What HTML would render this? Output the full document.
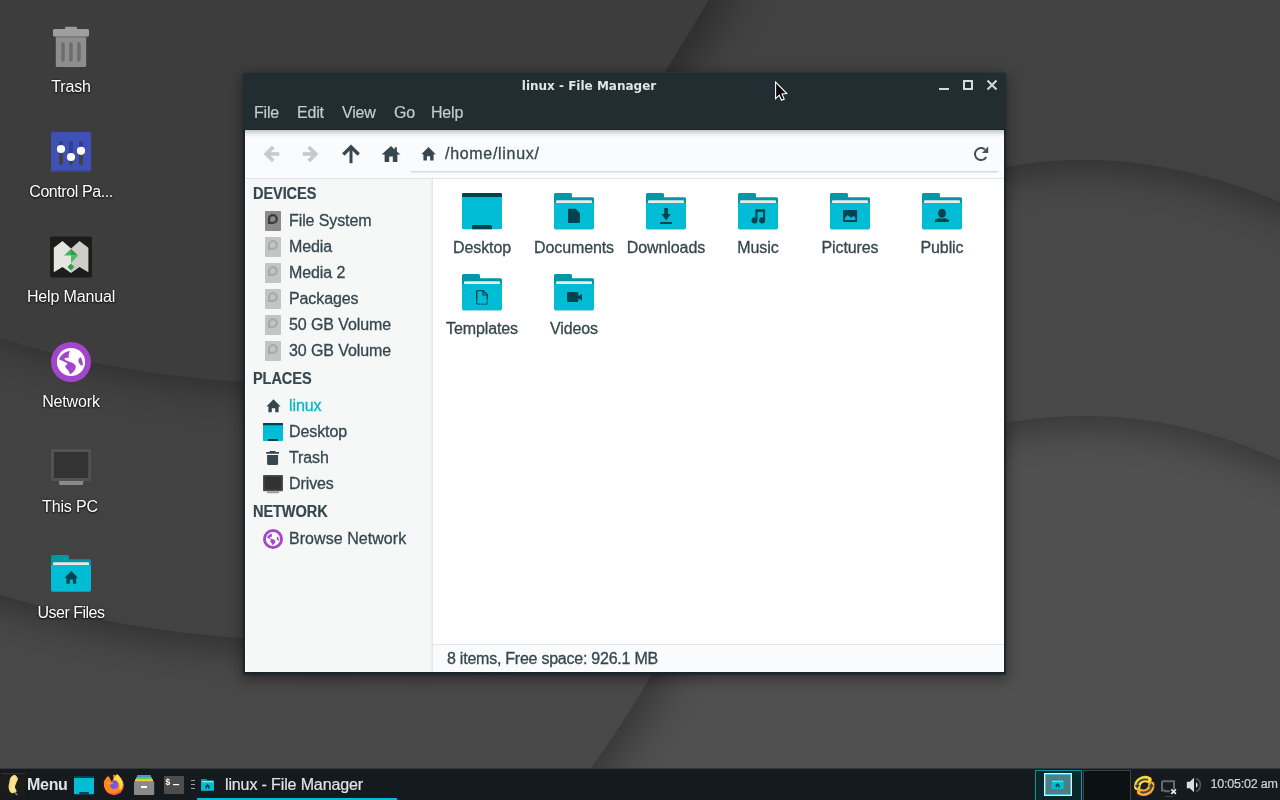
<!DOCTYPE html>
<html lang="en">
<head>
<meta charset="utf-8">
<title>linux - File Manager</title>
<style>
*{box-sizing:border-box;margin:0;padding:0}
html,body{width:1280px;height:800px;overflow:hidden;background:#444}
body{position:relative;font-family:"Liberation Sans","DejaVu Sans",sans-serif;color:#37474f;font-size:16px}
.abs{position:absolute}
#win,#panel,.dicon{will-change:transform}
.si,.fi,#status,.loc{-webkit-text-stroke:.3px currentColor}
.menu,.ptxt{-webkit-text-stroke:.2px currentColor}
#wall{position:absolute;left:0;top:0;width:1280px;height:800px}
/* desktop icons */
.dicon{position:absolute;width:120px;text-align:center;color:#fff;font-size:16px;line-height:20px;letter-spacing:-.15px;white-space:nowrap;margin-top:1px;text-shadow:0 1px 2px rgba(0,0,0,.85),0 0 2px rgba(0,0,0,.6)}
.dicon svg{display:block;margin:0 auto}
/* window */
#win{position:absolute;left:243px;top:72px;width:763px;height:602px;background:#1b262c;border-radius:3px 3px 0 0;box-shadow:0 4px 14px 1px rgba(0,0,0,.4),0 1px 2px rgba(0,0,0,.25)}
#tbar{position:absolute;left:0;top:0;width:763px;height:58px;background:#222d32;border-radius:3px 3px 0 0;box-shadow:inset 0 1px 0 #2a373d,inset 0 -1px 0 #1c262b}
#title{position:absolute;left:0;top:5px;width:692px;text-align:center;font-family:"DejaVu Sans","Liberation Sans",sans-serif;font-weight:bold;font-size:12px;line-height:18px;color:#dfe5e8}
.menu{position:absolute;top:31px;letter-spacing:-.2px;font-size:16px;line-height:20px;color:#c3ccd1}
#tool{position:absolute;left:2px;top:58px;width:759px;height:48px;background:linear-gradient(#c2c4c5 0,#d7d9da 2px,#e9eaeb 4px,#f5f6f7 6px,#fafbfc 8.500px)}
#sep1{position:absolute;left:2px;top:106px;width:759px;height:1px;background:#e2e4e5}
#side{position:absolute;left:2px;top:107px;width:187px;height:493px;background:#f6f8f8;border-left:1px solid #fff}
#sidesep{position:absolute;left:186px;top:107px;width:4px;height:493px;background:linear-gradient(to right,#f6f8f8,#eef0f1 50%,#e2e4e6)}
#main{position:absolute;left:190px;top:107px;width:571px;height:465px;background:#fff}
#stsep{position:absolute;left:190px;top:572px;width:571px;height:1px;background:#e2e4e5}
#status{position:absolute;left:190px;top:573px;width:571px;height:27px;background:#fafbfc;border-right:1px solid #fff;border-bottom:1px solid #fff;font-size:16px;line-height:28px;padding-left:14px;letter-spacing:-.24px}
.sh{position:absolute;left:8px;font-weight:bold;font-size:16px;line-height:20px;color:#37474f;transform-origin:0 50%;transform:scaleX(.91);margin-top:1px;letter-spacing:-.1px;-webkit-text-stroke:.2px currentColor}
.si{position:absolute;left:44px;font-size:16px;line-height:20px;color:#37474f;letter-spacing:-.1px;white-space:nowrap;margin-top:1px}
.fi{position:absolute;width:110px;text-align:center;font-size:16px;line-height:20px;color:#37474f;letter-spacing:-.1px;margin-top:1px}
/* panel */
#panel{position:absolute;left:0;top:769px;width:1280px;height:31px;background:#151a1e;box-shadow:0 -1px 0 #33373a}
</style>
</head>
<body>
<svg id="wall" viewBox="0 0 1280 800">
<defs>
<filter id="bl" x="-20%" y="-20%" width="140%" height="140%"><feGaussianBlur stdDeviation="17"/></filter>
<filter id="bl2" x="-20%" y="-20%" width="140%" height="140%"><feGaussianBlur stdDeviation="20"/></filter>
</defs>
<rect width="1280" height="800" fill="#505050"/>
<!-- right middle band (below arc C, above arc D) -->
<g>
<path d="M600 -40 L1400 -40 L1400 500 Q1330 478 1280 460 Q1180 416 1088 416 Q1040 416 1000 424 L900 440 L600 440 Z" fill="#000" opacity=".31" filter="url(#bl)" transform="translate(0,12)"/>
<path d="M600 -40 L1400 -40 L1400 500 Q1330 478 1280 460 Q1180 416 1088 416 Q1040 416 1000 424 L900 440 L600 440 Z" fill="#484848"/>
</g>
<!-- top right region (above arc C) -->
<g>
<path d="M600 -40 L1400 -40 L1400 250 Q1330 222 1280 202 Q1180 160 1085 160 Q1040 160 1000 168.500 L900 185 L600 185 Z" fill="#000" opacity=".31" filter="url(#bl)" transform="translate(0,12)"/>
<path d="M600 -40 L1400 -40 L1400 250 Q1330 222 1280 202 Q1180 160 1085 160 Q1040 160 1000 168.500 L900 185 L600 185 Z" fill="#424242"/>
</g>
<!-- bottom-left region (left of diagonal F) -->
<g>
<path d="M-60 300 L665 300 Q668 600 653 672 Q625 722 588 772 L545 840 L-60 840 Z" fill="#000" opacity=".33" filter="url(#bl2)" transform="translate(16,4)"/>
<path d="M-60 300 L665 300 Q668 600 653 672 Q625 722 588 772 L545 840 L-60 840 Z" fill="#484848"/>
</g>
<!-- between arc A and arc B -->
<g>
<path d="M-60 300 L-60 570 L0 595 Q150 640 330 642 Q500 640 640 600 L700 300 Z" fill="#000" opacity=".31" filter="url(#bl)" transform="translate(0,12)"/>
<path d="M-60 300 L-60 570 L0 595 Q150 640 330 642 Q500 640 640 600 L700 300 Z" fill="#424242"/>
</g>
<!-- top-left region (above arc A, left of diagonal E) -->
<g>
<path d="M-60 -40 L733.400 -40 L709 0 L665 72 Q618 160 600 330 Q420 385 300 385 Q130 380 0 338 L-60 315 Z" fill="#000" opacity=".33" filter="url(#bl2)" transform="translate(16,8)"/>
<path d="M-60 -40 L733.400 -40 L709 0 L665 72 Q618 160 600 330 Q420 385 300 385 Q130 380 0 338 L-60 315 Z" fill="#3d3d3d"/>
</g>
</svg>


<svg width="0" height="0" style="position:absolute">
<defs>
<symbol id="fold" viewBox="0 0 40 37" overflow="visible">
  <path d="M0 1.500 A1.500 1.500 0 0 1 1.500 0 H16.500 A1.500 1.500 0 0 1 18 1.500 V4.200 H38.500 A1.500 1.500 0 0 1 40 5.700 V14 H0 Z" fill="#0097a7"/>
  <path d="M2 8.200 A1 1 0 0 1 3 7.200 H37 A1 1 0 0 1 38 8.200 V12 H2 Z" fill="#ece9e7"/>
  <path d="M0 11.400 A1.400 1.400 0 0 1 1.400 10 H38.600 A1.400 1.400 0 0 1 40 11.400 V34.800 A1.400 1.400 0 0 1 38.600 36.200 H1.400 A1.400 1.400 0 0 1 0 34.800 Z" fill="#00bcd4"/>
  <path d="M.3 35.500 A1.400 1.400 0 0 0 1.400 36.300 H38.600 A1.400 1.400 0 0 0 39.700 35.500 Z" fill="#6fb7bf" opacity=".55" transform="translate(0,.5)"/>
</symbol>
<symbol id="desk" viewBox="0 0 40 37" overflow="visible">
  <rect width="40" height="36.200" rx="1.500" fill="#00bcd4"/>
  <path d="M0 1.500 A1.500 1.500 0 0 1 1.500 0 H38.500 A1.500 1.500 0 0 1 40 1.500 V4 H0 Z" fill="#00424d"/>
  <path d="M10 36.200 V33.500 A1.500 1.500 0 0 1 11.500 32 H28.500 A1.500 1.500 0 0 1 30 33.500 V36.200 Z" fill="#00424d"/>
</symbol>
</defs>
</svg>

<!-- desktop icons -->
<svg class="abs" style="left:0;top:0" width="140" height="640" viewBox="0 0 140 640">
  <!-- trash -->
  <rect x="65" y="26.800" width="12" height="3" rx=".8" fill="#9a9a9a"/>
  <rect x="53" y="29" width="36" height="7.600" rx="1.600" fill="#9e9e9e"/>
  <path d="M55.800 36.600 H86.200 V65.400 A1.600 1.600 0 0 1 84.600 67 H57.400 A1.600 1.600 0 0 1 55.800 65.400 Z" fill="#8e8e8e"/>
  <rect x="55.800" y="36.600" width="30.400" height="1.300" fill="#7c7c7c"/>
  <rect x="61.200" y="42" width="3.600" height="19.800" rx="1.800" fill="#6e6e6e"/>
  <rect x="69.100" y="42" width="3.600" height="19.800" rx="1.800" fill="#6e6e6e"/>
  <rect x="77.200" y="42" width="3.600" height="19.800" rx="1.800" fill="#6e6e6e"/>
  <!-- control panel -->
  <rect x="51" y="132" width="40.200" height="40" rx="2" fill="#3f51b5"/>
  <rect x="51" y="170.500" width="40.200" height="1.500" rx=".8" fill="#35449a"/>
  <g>
    <rect x="59" y="141" width="4" height="24" rx="2" fill="#424242"/><path d="M59 149 V143 A2 2 0 0 1 63 143 V149 Z" fill="#303f9f"/>
    <rect x="69" y="141" width="4" height="24" rx="2" fill="#424242"/><path d="M69 157 V143 A2 2 0 0 1 73 143 V157 Z" fill="#303f9f"/>
    <rect x="79" y="141" width="4" height="24" rx="2" fill="#424242"/><path d="M79 151 V143 A2 2 0 0 1 83 143 V151 Z" fill="#303f9f"/>
    <circle cx="61" cy="149" r="4.100" fill="#fff"/><circle cx="71" cy="157" r="4.100" fill="#fff"/><circle cx="81" cy="150.800" r="4.100" fill="#fff"/>
  </g>
  <!-- help manual -->
  <rect x="50" y="236.500" width="42" height="41" rx="2" fill="#1c1c1c"/>
  <path d="M53.800 247.700 L62.500 241 L71 248.400 V273 L62.500 267 L53.800 272.200 Z" fill="#e7e5e2"/>
  <path d="M71 248.400 L79.500 241 L88.400 247.700 V272.200 L79.500 267 L71 273 Z" fill="#cfcdc9"/>
  <path d="M64 255.500 L71 248.800 V255.500 Z" fill="#43b85b"/>
  <path d="M71 248.800 L78 255.500 H71 Z" fill="#2e9b45"/>
  <path d="M71 255.500 H78 L71 263 Z" fill="#49bd5f"/>
  <path d="M67.500 267 L71 263.400 V270.600 Z" fill="#2b9a41"/>
  <path d="M71 263.400 L74.500 267 L71 270.600 Z" fill="#38a94e"/>
  <!-- network -->
  <g transform="translate(71,362)"><circle r="20" fill="#a346cc"/><circle r="14.100" fill="#fff"/><path d="M-1.200 -11.100 C-5.500 -10.600 -10 -7.600 -12 -2.800 L-5 .5 L-3.400 1.900 L-5.500 3.500 C-6.200 4.400 -5.600 5.600 -4 7 C-2.800 8.200 -1.600 10 -1 12.500 C.2 11.600 2.400 10 3.500 8.500 C4.600 7 5 5 4.500 3.500 C4 2.400 2 1.200 .5 .5 C-1 0 -2 -.4 -3 -.750 C-4 -1 -5.500 -1.800 -6.250 -2.750 C-6.800 -3.600 -6 -4.200 -5.500 -4 L-3.500 -4.500 L-1.750 -4 C-2.400 -5.500 -2.400 -7 -2.250 -7.500 C-1.800 -9 -1.400 -10 -1.200 -11.100 Z" fill="#a346cc"/><path d="M9.500 -5 C11 -3 12 .5 11.750 3.500 L10.500 3.500 C9 2.500 8 1.500 7.600 0 C7 -1.500 7.500 -3.500 9.500 -5 Z" fill="#a346cc"/></g>
  <!-- this pc -->
  <rect x="51" y="449" width="40" height="32" rx="1.600" fill="#525252"/>
  <rect x="54" y="452" width="34.300" height="26" fill="#333"/>
  <path d="M59 481 H83.200 V483.400 A1.600 1.600 0 0 1 81.600 485 H60.600 A1.600 1.600 0 0 1 59 483.400 Z" fill="#8a8a8a"/>
  <!-- user files -->
  <svg x="51" y="555" width="40" height="37" viewBox="0 0 40 37"><use href="#fold"/><path d="M13.600 22.700 L20.300 16 L27 22.700 H25.200 V28.800 H21.900 V24.600 H18.700 V28.800 H15.400 V22.700 Z" fill="#00424d"/></svg>
</svg>
<div class="dicon" style="left:11px;top:76px">Trash</div>
<div class="dicon" style="left:11px;top:181px;letter-spacing:-.42px">Control Pa...</div>
<div class="dicon" style="left:11px;top:286px">Help Manual</div>
<div class="dicon" style="left:11px;top:391px">Network</div>
<div class="dicon" style="left:10px;top:496px">This PC</div>
<div class="dicon" style="left:11px;top:601px;letter-spacing:-.5px;margin-top:2px">User Files</div>
<div id="win">
  <div id="tbar"></div>
  <div id="title">linux - File Manager</div>
  <div class="menu" style="left:11px">File</div>
  <div class="menu" style="left:54px">Edit</div>
  <div class="menu" style="left:99px">View</div>
  <div class="menu" style="left:151px">Go</div>
  <div class="menu" style="left:188px">Help</div>
  <div id="tool"></div>

  <svg class="abs" style="left:0;top:0" width="763" height="110" viewBox="243 72 763 110">
    <!-- window buttons -->
    <rect x="939" y="88" width="10" height="2" fill="#d3dade"/>
    <rect x="964" y="81" width="8" height="8" fill="none" stroke="#d3dade" stroke-width="2"/>
    <path d="M987.5 80.5 L996.5 89.5 M996.5 80.5 L987.5 89.5" stroke="#d3dade" stroke-width="2" fill="none"/>
    <!-- back / forward (disabled) -->
    <path d="M273.300 147 L266.300 154 L273.300 161" stroke="#c6cacd" stroke-width="3.800" fill="none"/><path d="M267.500 154 H279.200" stroke="#c6cacd" stroke-width="3.700" fill="none"/>
    <path d="M308.700 147 L315.700 154 L308.700 161" stroke="#c6cacd" stroke-width="3.800" fill="none"/><path d="M314.500 154 H302.800" stroke="#c6cacd" stroke-width="3.700" fill="none"/>
    <!-- up -->
    <path d="M343.300 154.500 L351 146.800 L358.700 154.500" stroke="#37474f" stroke-width="3.400" fill="none"/>
    <path d="M351 147.500 V163.200" stroke="#37474f" stroke-width="3" fill="none"/>
    <!-- home -->
    <path d="M381.6 154.6 L391 146 L394.700 149.400 V147.300 H396.900 V151.400 L400.4 154.6 H397.4 V162 H392.8 V156.4 H389.2 V162 H384.6 V154.6 Z" fill="#37474f"/>
    <!-- location home -->
    <path d="M421.3 154.2 L428.5 147 L435.7 154.2 H433.6 V160.4 H430.1 V156.2 H426.9 V160.4 H423.4 V154.2 Z" fill="#37474f"/>
    <!-- entry underline -->
    <rect x="411" y="171" width="587" height="1.5" fill="#d6dadc"/>
    <!-- reload -->
    <path d="M986.2 157 A6 6 0 1 1 984.8 149.4" stroke="#414f56" stroke-width="2" fill="none"/>
    <path d="M988.2 146.6 V152.9 H981.9 Z" fill="#414f56"/>
  </svg>
  <div class="abs loc" style="left:202px;top:72px;font-size:16px;line-height:20px;letter-spacing:.7px;color:#37474f">/home/linux/</div>
  <div id="sep1"></div>
  <div id="side"></div>
  <div id="sidesep"></div>
<svg class="abs" style="left:2px;top:107px" width="187" height="493" viewBox="245 179 187 493"><g transform="translate(265,211)"><rect width="16" height="20" rx=".8" fill="#8b8b8b"/><path d="M4.050 11.850 V8 A3.850 3.850 0 1 1 7.900 11.850 Z" fill="none" stroke="#3b3b3b" stroke-width="2.300" stroke-linejoin="miter"/></g><g transform="translate(265,237)"><rect width="16" height="20" rx=".8" fill="#c3c5c5"/><path d="M4.050 11.850 V8 A3.850 3.850 0 1 1 7.900 11.850 Z" fill="none" stroke="#a9abab" stroke-width="2.300" stroke-linejoin="miter"/></g><g transform="translate(265,263)"><rect width="16" height="20" rx=".8" fill="#c3c5c5"/><path d="M4.050 11.850 V8 A3.850 3.850 0 1 1 7.900 11.850 Z" fill="none" stroke="#a9abab" stroke-width="2.300" stroke-linejoin="miter"/></g><g transform="translate(265,289)"><rect width="16" height="20" rx=".8" fill="#c3c5c5"/><path d="M4.050 11.850 V8 A3.850 3.850 0 1 1 7.900 11.850 Z" fill="none" stroke="#a9abab" stroke-width="2.300" stroke-linejoin="miter"/></g><g transform="translate(265,315)"><rect width="16" height="20" rx=".8" fill="#c3c5c5"/><path d="M4.050 11.850 V8 A3.850 3.850 0 1 1 7.900 11.850 Z" fill="none" stroke="#a9abab" stroke-width="2.300" stroke-linejoin="miter"/></g><g transform="translate(265,341)"><rect width="16" height="20" rx=".8" fill="#c3c5c5"/><path d="M4.050 11.850 V8 A3.850 3.850 0 1 1 7.900 11.850 Z" fill="none" stroke="#a9abab" stroke-width="2.300" stroke-linejoin="miter"/></g>
<!-- home -->
<path d="M266.4 406.4 L273.5 399.2 L280.6 406.4 H278.6 V412.2 H275.2 V408.2 H271.8 V412.2 H268.4 V406.4 Z" fill="#37474f"/>
<!-- desktop -->
<g transform="translate(263,423)"><rect width="20" height="18" rx=".8" fill="#00bcd4"/><path d="M0 .8 A.8 .8 0 0 1 .8 0 H19.2 A.8 .8 0 0 1 20 .8 V2.2 H0 Z" fill="#00424d"/><rect x="5" y="16" width="10" height="2" fill="#00424d"/></g>
<!-- trash -->
<path d="M270 451 H275.200 L276 451.900 H279 V453.800 H266.200 V451.900 H269.200 Z M267.100 455 H278.100 V463.400 A1.600 1.600 0 0 1 276.500 465 H268.700 A1.600 1.600 0 0 1 267.100 463.400 Z" fill="#37474f"/>
<!-- drives / monitor -->
<g transform="translate(263,475)"><rect width="20" height="16.200" rx="1" fill="#4f4f4f"/><rect x="1.500" y="1.500" width="17" height="13.200" fill="#323232"/><path d="M4 16.200 H16 V17.400 A.8 .8 0 0 1 15.200 18.200 H4.800 A.8 .8 0 0 1 4 17.400 Z" fill="#9a9a9a"/></g>
<!-- network -->
<g transform="translate(273,539)"><circle r="10" fill="#a648c9"/><circle r="7.100" fill="#fff"/><g transform="scale(.5)"><path d="M-1.200 -11.100 C-5.500 -10.600 -10 -7.600 -12 -2.800 L-5 .5 L-3.400 1.900 L-5.500 3.500 C-6.200 4.400 -5.600 5.600 -4 7 C-2.800 8.200 -1.600 10 -1 12.500 C.2 11.600 2.400 10 3.500 8.500 C4.600 7 5 5 4.500 3.500 C4 2.400 2 1.200 .5 .5 C-1 0 -2 -.4 -3 -.750 C-4 -1 -5.500 -1.800 -6.250 -2.750 C-6.800 -3.600 -6 -4.200 -5.500 -4 L-3.500 -4.500 L-1.750 -4 C-2.400 -5.500 -2.400 -7 -2.250 -7.500 C-1.800 -9 -1.400 -10 -1.200 -11.100 Z" fill="#a648c9"/><path d="M9.500 -5 C11 -3 12 .5 11.750 3.500 L10.500 3.500 C9 2.500 8 1.500 7.600 0 C7 -1.500 7.500 -3.500 9.500 -5 Z" fill="#a648c9"/></g></g>
</svg>
  <div class="si" style="left:46px;top:138px">File System</div>
  <div class="si" style="left:46px;top:164px">Media</div>
  <div class="si" style="left:46px;top:190px">Media 2</div>
  <div class="si" style="left:46px;top:216px">Packages</div>
  <div class="si" style="left:46px;top:242px">50 GB Volume</div>
  <div class="si" style="left:46px;top:268px">30 GB Volume</div>
  <div class="si" style="left:46px;top:323px;color:#00b7ce">linux</div>
  <div class="si" style="left:46px;top:349px">Desktop</div>
  <div class="si" style="left:46px;top:375px">Trash</div>
  <div class="si" style="left:46px;top:401px">Drives</div>
  <div class="si" style="left:46px;top:456px;letter-spacing:.05px">Browse Network</div>
  <div class="sh" style="left:10px;top:111px">DEVICES</div>
  <div class="sh" style="left:10px;top:296px">PLACES</div>
  <div class="sh" style="left:10px;top:429px">NETWORK</div>
  <div id="main">
    <svg class="abs" style="left:29px;top:14px" width="40" height="37" viewBox="0 0 40 37"><use href="#desk"/></svg>
    <div class="fi" style="left:-6px;top:58px">Desktop</div>
    <svg class="abs" style="left:121px;top:14px" width="40" height="37" viewBox="0 0 40 37"><use href="#fold"/><path d="M15 15.800 H21.600 L26 20.300 V29 A1 1 0 0 1 25 30 H15 A1 1 0 0 1 14 29 V16.800 A1 1 0 0 1 15 15.800 Z" fill="#00424d"/></svg>
    <div class="fi" style="left:86px;top:58px">Documents</div>
    <svg class="abs" style="left:213px;top:14px" width="40" height="37" viewBox="0 0 40 37"><use href="#fold"/><path d="M18.300 15 H21.900 V21 H24.600 L20.100 27.400 L15.600 21 H18.300 Z M14 29.100 H26 V30.900 H14 Z" fill="#00424d"/></svg>
    <div class="fi" style="left:178px;top:58px">Downloads</div>
    <svg class="abs" style="left:305px;top:14px" width="40" height="37" viewBox="0 0 40 37"><use href="#fold"/><path d="M17.400 16.200 H27.100 V27.400 A3 3 0 1 1 25 24.540 V19 H19.500 V27.400 A3 3 0 1 1 17.400 24.540 Z" fill="#00424d"/></svg>
    <div class="fi" style="left:270px;top:58px">Music</div>
    <svg class="abs" style="left:397px;top:14px" width="40" height="37" viewBox="0 0 40 37"><use href="#fold"/><rect x="13.100" y="17" width="14" height="12" rx=".6" fill="#00424d"/><path d="M14.900 27.100 V24.800 L17.800 21.900 L21.100 24.800 L23.600 23 L25.300 24.600 V27.100 Z" fill="#00bcd4"/></svg>
    <div class="fi" style="left:362px;top:58px">Pictures</div>
    <svg class="abs" style="left:489px;top:14px" width="40" height="37" viewBox="0 0 40 37"><use href="#fold"/><ellipse cx="20" cy="20.300" rx="3.900" ry="4.500" fill="#00424d"/><path d="M13 28.900 V26.800 C14.500 26.200 16.200 25.600 17.600 25 C19 26 21 26 22.400 25 C23.800 25.600 25.500 26.200 27 26.800 V28.900 Z" fill="#00424d"/></svg>
    <div class="fi" style="left:454px;top:58px">Public</div>
    <svg class="abs" style="left:29px;top:95px" width="40" height="37" viewBox="0 0 40 37"><use href="#fold"/><path d="M14.700 25.500 V17.600 A1 1 0 0 1 15.700 16.600 H21.200 L25.300 20.700 V25.500" fill="none" stroke="#00424d" stroke-width="1.400"/><path d="M21 16.600 V21 H25.300" fill="none" stroke="#00424d" stroke-width="1.200"/><path d="M14.700 25.500 V30.300 H25.300 V25.500" fill="none" stroke="#00424d" stroke-width="1.400" stroke-dasharray=".9 .9"/></svg>
    <div class="fi" style="left:-6px;top:139px">Templates</div>
    <svg class="abs" style="left:121px;top:95px" width="40" height="37" viewBox="0 0 40 37"><use href="#fold"/><path d="M13.100 19 A1 1 0 0 1 14.100 18 H23.400 A1 1 0 0 1 24.400 19 V22.200 L28 20 V26.800 L24.400 24.200 V26.900 A1 1 0 0 1 23.400 27.900 H14.100 A1 1 0 0 1 13.100 26.900 Z" fill="#00424d"/></svg>
    <div class="fi" style="left:86px;top:139px">Videos</div>
  </div>
  <div id="stsep"></div>
  <div id="status">8 items, Free space: 926.1 MB</div>
</div>

<svg class="abs" style="left:770px;top:76px" width="24" height="30" viewBox="770 76 24 30"><path d="M775.600 82 V98.600 L779.300 95.100 L781.500 100.200 L784.200 99.100 L782 94 L786.800 93.600 Z" fill="#0a0a0a" stroke="#fff" stroke-width="1.100" stroke-linejoin="miter"/></svg>
<div id="panel">
<svg class="abs" style="left:0;top:-1px" width="1280" height="32" viewBox="0 768 1280 32">
  <!-- menu button -->
  <rect x="1" y="773" width="24" height="24" fill="#1b1b1b"/><rect x="1" y="773" width="24" height="1" fill="#323232"/>
  <path d="M14.700 774.700 C16 775.400 17.400 776.800 17.900 778.800 C18.100 779.800 17.500 780.400 17 781.200 C16.600 782.200 16.200 783.200 15.800 784.300 C15.400 785.400 14.900 786.400 15 787.500 C15.200 788.600 16.100 789.200 16.300 790 C16.500 790.600 16.700 791 16.600 791.500 C16 792.100 15.300 792.400 14.500 792.800 C13.600 793.200 12.800 793.400 11.900 793.200 C11.100 792.800 10.400 792.200 9.800 791.500 C9.200 790.600 8.900 789.600 8.800 788.500 C8.600 787.700 8.500 786.900 8.600 786 C8.700 784.800 9 783.700 9.300 782.500 C9.500 781.200 9.700 780 10 778.800 C10.300 778 10.700 777.300 11.200 776.800 C11.800 776.200 12.400 775.800 13 775.500 C13.600 775.200 14.200 774.900 14.700 774.700 Z" fill="#fbe083"/>
  <path d="M13.900 777 C13.200 781 12.800 786 12.700 791.500" stroke="#fff2bd" stroke-width="1" fill="none" opacity=".85"/>
  <path d="M14.600 792 L17.200 795" stroke="#8a8a8a" stroke-width="1.300" fill="none"/>
  <!-- show desktop -->
  <g transform="translate(74,776)"><rect width="20" height="18.200" rx=".8" fill="#00bcd4"/><path d="M0 .8 A.8 .8 0 0 1 .8 0 H19.200 A.8 .8 0 0 1 20 .8 V2 H0 Z" fill="#00424d"/><rect x="5.200" y="16" width="9.600" height="2.200" fill="#00424d"/></g>
  <!-- firefox -->
  <g transform="translate(114,785)">
    <circle cx="0" cy=".3" r="9.900" fill="#ff4f6a"/>
    <circle cx="-.9" cy="-.9" r="9.300" fill="#ff8a16"/>
    <path d="M-5.400 -11 H-1 L-.5 -5.400 L-2.500 -4 L-4.300 -5.400 L-5 -7.400 Z" fill="#151a1e"/>
    <path d="M-8.400 -5.600 L-6.700 -8.600 L-5.500 -6.300 L-4.300 -7.700 L-3.300 -4.800 L-6 -3 Z" fill="#ff8a16"/>
    <path d="M-.8 -5.400 C.6 -7.200 1.800 -9.400 3 -11.100 C5.400 -9.200 7.800 -6.400 8.500 -3 C9 -.2 8.700 2.200 7.600 3.800 C6.800 4.800 5.800 5.200 5.200 4.600 C6.200 2 5.600 -.8 4.200 -2.600 C3 -4 1 -4.800 -.8 -5.400 Z" fill="#ffe03f"/>
    <circle cx="0" cy="-.3" r="4.400" fill="#7e57d6"/>
    <path d="M-6.400 -3.200 C-4.400 -3.400 -2.400 -3.200 -1.200 -2.600 C-.4 -2.200 -.6 -1.400 -1.600 -1.200 C-3 -.9 -3.900 -.1 -4.200 1.400 L-6.600 .4 Z" fill="#ff8a16"/>
    <path d="M-7 -1.900 C-5.800 -2.300 -4.400 -2.300 -3.400 -2 C-2.800 -1.700 -3 -1.200 -3.800 -1 C-5 -.8 -6 -.6 -6.800 -.4 Z" fill="#ffb733"/>
  </g>
  <!-- file manager -->
  <rect x="137" y="775" width="14" height="3" rx=".8" fill="#4b8fe0"/>
  <rect x="136" y="777" width="16" height="3" rx=".8" fill="#6cc04a"/>
  <rect x="135" y="779" width="18" height="3" rx=".8" fill="#f5c542"/>
  <rect x="134" y="781.200" width="20.200" height="13.800" rx="1" fill="#8a8a8a"/>
  <rect x="141" y="786" width="6" height="2" fill="#fff"/>
  <!-- terminal -->
  <rect x="164" y="776" width="20" height="18" rx=".8" fill="#4d4d4d"/>
  <text x="165.600" y="785.400" font-family="Liberation Sans, DejaVu Sans, sans-serif" font-size="8.500" font-weight="bold" fill="#fff">$</text>
  <rect x="173" y="784" width="6.200" height="1.200" fill="#fff"/>
  <!-- handle -->
  <rect x="191" y="780" width="4" height="1" fill="#9aa0a4"/><rect x="191" y="784" width="4" height="1" fill="#9aa0a4"/><rect x="191" y="788" width="4" height="1" fill="#9aa0a4"/>
  <!-- task button -->
  <svg x="201" y="779" width="13" height="12" viewBox="0 0 40 37" preserveAspectRatio="none"><use href="#fold"/><path d="M12 23.500 L20 15 L28 23.500 H26 V30 H22 V25 H18 V30 H14 V23.500 Z" fill="#00424d"/></svg>
  <rect x="197" y="798" width="200" height="2" fill="#00bcd4"/>
  <!-- pager -->
  <rect x="1035.500" y="770.500" width="46" height="30" fill="#0c272c" stroke="#0097a7" stroke-width="1"/>
  <rect x="1044.500" y="773.500" width="27" height="22" fill="#547b82" stroke="#e4f1f3" stroke-width="1"/>
  <rect x="1045.500" y="774.500" width="25" height="20" fill="none" stroke="#3cc6d8" stroke-width="1"/>
  <svg x="1051.300" y="778.700" width="12.600" height="10.800" viewBox="0 0 40 37" preserveAspectRatio="none"><use href="#fold"/><path d="M12 23.500 L20 15 L28 23.500 H26 V30 H22 V25 H18 V30 H14 V23.500 Z" fill="#00424d"/></svg>
  <rect x="1083.500" y="770.500" width="47" height="30" fill="#0c1114" stroke="#3d4245" stroke-width="1"/>
  <!-- updates -->
  <g transform="translate(1144.300,785.900) scale(1.1)" fill="none" stroke-linecap="round">
    <path d="M3.800 -5.500 C-.5 -7.600 -6.600 -4.800 -6.400 1" stroke="#fdd835" stroke-width="5.800"/>
    <path d="M-3.800 5.500 C.5 7.600 6.600 4.800 6.400 -1" stroke="#ffa726" stroke-width="5.800"/>
    <path d="M3.400 -5.400 C-.5 -7 -6.400 -4.600 -6.400 .2" stroke="#37474f" stroke-width="1.700" stroke-linecap="butt"/>
    <path d="M-8.700 -.8 H-4.100 L-6.400 2.600 Z" fill="#37474f"/>
    <path d="M-3.400 5.400 C.5 7 6.400 4.600 6.400 -.2" stroke="#37474f" stroke-width="1.700" stroke-linecap="butt"/>
    <path d="M8.700 .8 H4.100 L6.400 -2.600 Z" fill="#37474f"/>
    <circle cx="-.3" cy=".3" r="1.700" fill="#1d262b"/>
  </g>
  <!-- network disconnected -->
  <path d="M1162 781.200 H1174 V789 M1162 781.200 V790.400 H1164.500 L1165.500 791.200 H1170" stroke="#606b71" stroke-width="2" fill="none"/>
  <rect x="1165" y="796" width="8" height="1" fill="#3b4449"/>
  <path d="M1171.300 789.300 L1175.900 793.900 M1175.900 789.300 L1171.300 793.900" stroke="#e3e6e8" stroke-width="1.900" fill="none"/>
  <!-- volume -->
  <path d="M1186.800 781.700 H1189.800 L1194 777.800 V792.200 L1189.800 788.300 H1186.800 Z" fill="#d8dde0"/>
  <path d="M1196 782.200 A3.200 3.200 0 0 1 1196 787.800 Z" fill="#d8dde0"/>
  <path d="M1196.200 778.600 A7 7 0 0 1 1196.200 791.400" stroke="#4e575c" stroke-width="1.600" fill="none"/>
</svg>
<div class="abs" style="left:27px;top:6px;font-weight:bold;font-size:16px;line-height:20px;color:#dfe3e6;letter-spacing:-.3px">Menu</div>
<div class="abs ptxt" style="left:225px;top:6px;font-size:16px;line-height:20px;color:#e0e3e5;letter-spacing:-.13px;white-space:nowrap">linux - File Manager</div>
<div class="abs ptxt" style="left:1210.500px;top:6px;font-size:12.500px;line-height:18px;color:#d0d4d6;white-space:nowrap;letter-spacing:-.2px">10:05:02 am</div>
</div>
</body>
</html>
